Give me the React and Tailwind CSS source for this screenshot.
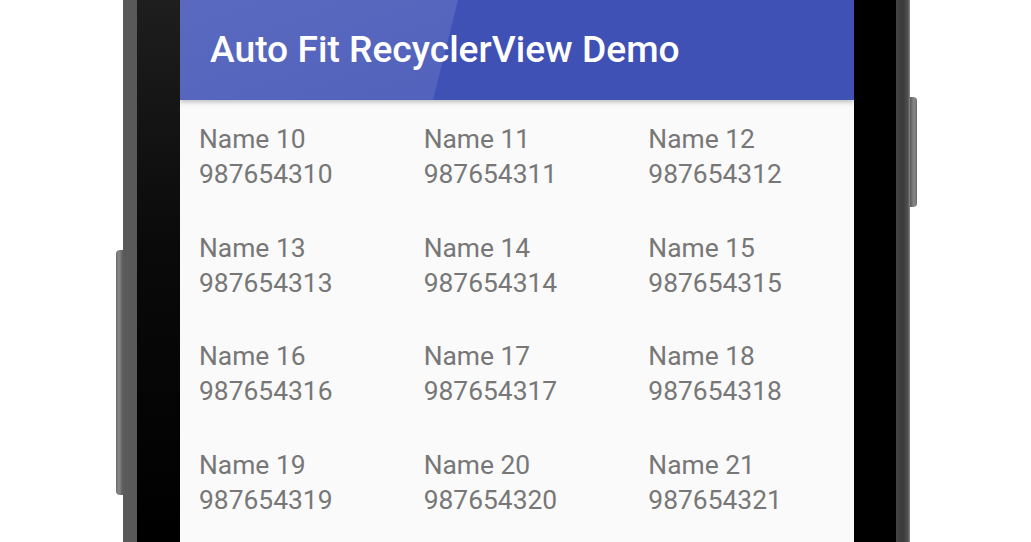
import React from "react";

const items = Array.from({ length: 12 }, (_, i) => i + 10);

function Toolbar() {
  return (
    <div className="relative h-[100px] shrink-0 bg-[#3f51b5] flex items-center pl-[30px] shadow-[0_2px_5px_rgba(0,0,0,0.25)] z-10">
      {/* glare across the left part of the screen */}
      <div className="absolute inset-0 bg-[linear-gradient(160deg,rgba(255,255,255,0.14),rgba(255,255,255,0.07))] [clip-path:polygon(0_0,278px_0,253px_100%,0_100%)]" />
      <h1 className="relative text-white text-[37.2px] font-medium font-['Roboto',sans-serif]">
        Auto Fit RecyclerView Demo
      </h1>
    </div>
  );
}

function Grid() {
  return (
    <div className="grid grid-cols-3 content-start bg-[#fafafa] flex-1">
      {items.map((n) => (
        <div key={n} className="pl-[19px] pt-[22px] pb-[16.7px] text-[26.4px] leading-[35px] text-[#777777] font-['Roboto',sans-serif]">
          <div>Name {n}</div>
          <div>9876543{n}</div>
        </div>
      ))}
    </div>
  );
}

export default function App() {
  return (
    <div className="w-[1031px] h-[542px] bg-white overflow-hidden flex">
      <div className="w-[116px] shrink-0" />
      <div className="w-[7px] h-[245px] mt-[250px] shrink-0 rounded-l-[4px] bg-[linear-gradient(to_right,#6a6a6a,#8a8a8a_40%,#5a5a5a)]" />
      <div className="w-[787px] h-full shrink-0 flex bg-[linear-gradient(to_right,#5a5a5a,#3c3c3c_30%,#484848_70%,#3a3a3a)]">
        <div className="w-[14px]" />
        <div className="w-[43px] bg-[linear-gradient(to_bottom,#1e1e1e,#0a0a0a_45%,#000)]" />
        <div className="w-[674px] h-full flex flex-col overflow-hidden">
          <Toolbar />
          <Grid />
        </div>
        <div className="w-[42px] bg-black" />
        <div className="w-[14px] bg-[linear-gradient(to_right,#444,#3a3a3a_50%,#505050_85%,#8a8a8a)]" />
      </div>
      <div className="w-[7px] h-[110px] mt-[97px] shrink-0 rounded-r-[4px] bg-[linear-gradient(to_right,#5a5a5a,#8a8a8a_60%,#6a6a6a)]" />
    </div>
  );
}
